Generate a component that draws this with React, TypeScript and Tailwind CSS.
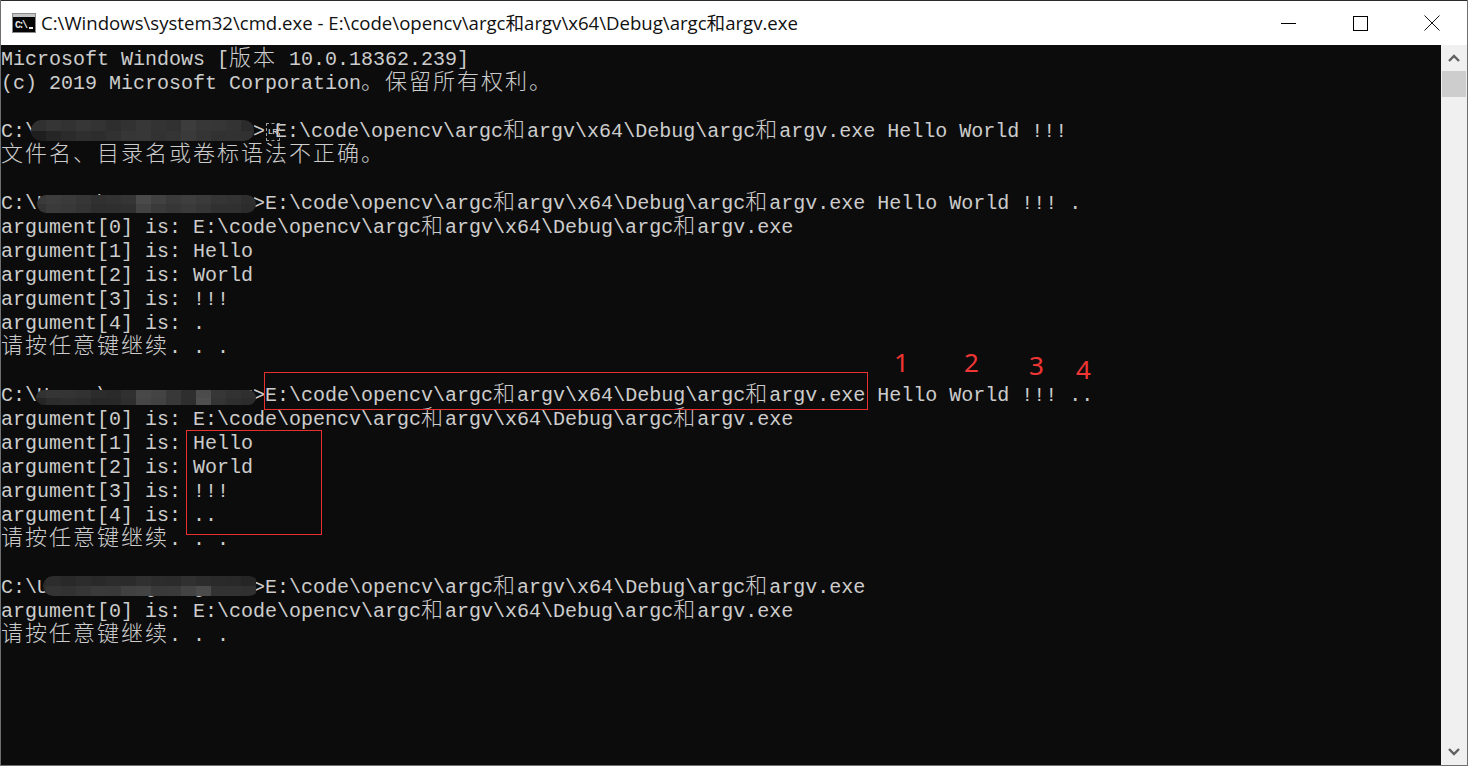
const cjk = /([\u3000-\u303f\u4e00-\u9fff\uff00-\uffef]+)/;

const EXE = "E:\\code\\opencv\\argc和argv\\x64\\Debug\\argc和argv.exe";
const USER = "C:\\Users\\xxxgxxxgxxxx>";

// mosaic over the user name: tiles are 15px wide and line up on multiples of 15
const smudges = [
  {
    left: 30, top: 0, width: 223, height: 21,
    upper: ["#303030", "#353535", "#323232", "#363636", "#333333", "#2e2e2e", "#323232", "#373737", "#333333", "#313131", "#3c3c3c", "#373737", "#363636", "#333333", "#2b2b2b"],
    lower: ["#1e1e1e", "#262626", "#2b2b2b", "#2f2f2f", "#2d2d2d", "#313131", "#363636", "#373737", "#323232", "#343434", "#3a3a3a", "#353535", "#313131", "#323232", "#313131"],
  },
  {
    left: 36, top: 3, width: 219, height: 18,
    upper: ["#3a3a3a", "#3d3d3d", "#3a3a3a", "#363636", "#303030", "#323232", "#353535", "#4a4a4a", "#414141", "#3a3a3a", "#3e3e3e", "#3a3a3a", "#353535", "#333333", "#2e2e2e"],
    lower: ["#333333", "#3a3a3a", "#383838", "#343434", "#2e2e2e", "#2f2f2f", "#303030", "#434343", "#3a3a3a", "#363636", "#3a3a3a", "#363636", "#303030", "#303030", "#2c2c2c"],
  },
  {
    left: 35, top: 6, width: 220, height: 15,
    upper: ["#323232", "#353535", "#343434", "#323232", "#2c2c2c", "#2a2a2a", "#303030", "#484848", "#444444", "#383838", "#2e2e2e", "#4b4b4b", "#363636", "#323232", "#2f2f2f"],
    lower: ["#252525", "#2c2c2c", "#2e2e2e", "#2c2c2c", "#272727", "#282828", "#2e2e2e", "#464646", "#424242", "#383838", "#2e2e2e", "#4f4f4f", "#343434", "#2f2f2f", "#2c2c2c"],
  },
  {
    left: 42, top: 0, width: 216, height: 20,
    upper: ["#2a2a2a", "#2d2d2d", "#292929", "#2c2c2c", "#292929", "#2c2c2c", "#2b2b2b", "#303030", "#2c2c2c", "#2b2b2b", "#303030", "#2c2c2c", "#2a2a2a", "#292929", "#252525"],
    lower: ["#2c2c2c", "#343434", "#323232", "#363636", "#3a3a3a", "#393939", "#414141", "#434343", "#393939", "#3a3a3a", "#434343", "#4b4b4b", "#323232", "#323232", "#303030"],
  },
];

function Txt({ children }: { children: string }) {
  return (
    <>
      {children.split(cjk).map((part, i) =>
        cjk.test(part) ? (
          <span key={i} className="text-[22px] leading-[0] tracking-[2px] font-['Noto_Sans_CJK_SC',sans-serif] font-light">
            {part}
          </span>
        ) : (
          <span key={i}>{part}</span>
        )
      )}
    </>
  );
}

function Line({ text = "" }: { text?: string }) {
  return (
    <div className="h-6 leading-6 whitespace-pre">
      <Txt>{text}</Txt>
    </div>
  );
}

function Smudge({ index }: { index: number }) {
  const s = smudges[index];
  return (
    <div
      className="absolute flex flex-col overflow-hidden rounded-[10px]"
      style={{ left: s.left, top: s.top, width: s.width, height: s.height }}
    >
      {[s.upper, s.lower].map((row, r) => (
        <div key={r} className="flex flex-1" style={{ marginLeft: -(s.left % 15) }}>
          {row.map((c, i) => (
            <div key={i} className="h-full w-[15px] shrink-0" style={{ backgroundColor: c }} />
          ))}
        </div>
      ))}
    </div>
  );
}

function Prompt({ smudge, lre, rest }: { smudge: number; lre?: boolean; rest: string }) {
  return (
    <div className="relative h-6 leading-6 whitespace-pre">
      <span>{USER}</span>
      {lre && <span className="inline-block w-[10px]" />}
      <Txt>{rest}</Txt>
      {lre && (
        <span className="absolute left-[265px] top-[3px] h-[18px] w-[14px] border border-dashed border-[#a0a0a0] text-center font-['Liberation_Sans',sans-serif] text-[7px] font-bold leading-[16px]">
          LR
        </span>
      )}
      <Smudge index={smudge} />
    </div>
  );
}

function CmdIcon() {
  return (
    <svg width="24" height="20" viewBox="0 0 24 20" className="shrink-0">
      <rect width="24" height="20" fill="#8a8a8a" />
      <rect x="1" y="1" width="22" height="3" fill="#c4c4c4" />
      <rect x="1" y="4" width="22" height="15" fill="#050505" />
      <text x="3" y="15" fontSize="10" fontWeight="700" fill="#e8e8e8" fontFamily="Liberation Mono, monospace" textLength="13">
        C:\
      </text>
      <rect x="17" y="14" width="4" height="2" fill="#e8e8e8" />
    </svg>
  );
}

export default function App() {
  return (
    <div className="flex h-[766px] w-[1468px] flex-col overflow-hidden bg-white border-b border-r border-l border-[#6f6f6f]">
      {/* title bar */}
      <div className="flex h-[45px] shrink-0 items-center border-t border-t-[#2b2b2b] pl-[11px] bg-white">
        <CmdIcon />
        <span className="ml-[5px] whitespace-pre font-['Open_Sans','Noto_Sans_CJK_SC',sans-serif] text-[18.6px] text-[#111111]">
          {"C:\\Windows\\system32\\cmd.exe - " + EXE}
        </span>
        <div className="ml-auto flex h-full items-center">
          <div className="flex h-full w-[72px] items-center justify-center">
            <div className="h-px w-[15px] bg-black" />
          </div>
          <div className="flex h-full w-[72px] items-center justify-center">
            <div className="h-[15px] w-[15px] border border-black" />
          </div>
          <div className="flex h-full w-[71px] items-center justify-center">
            <svg width="16" height="16" viewBox="0 0 16 16" stroke="#111" strokeWidth="1" fill="none">
              <path d="M0.5 0.5 15.5 15.5M15.5 0.5 0.5 15.5" />
            </svg>
          </div>
        </div>
      </div>

      <div className="flex min-h-0 flex-1">
        {/* console */}
        <div className="relative flex-1 bg-[#0c0c0c] pt-[3px] font-['Liberation_Mono',monospace] text-[20px] text-[#cccccc]">
          <Line text="Microsoft Windows [版本 10.0.18362.239]" />
          <Line text="(c) 2019 Microsoft Corporation。保留所有权利。" />
          <Line />
          <Prompt smudge={0} lre rest={EXE + " Hello World !!!"} />
          <Line text="文件名、目录名或卷标语法不正确。" />
          <Line />
          <Prompt smudge={1} rest={EXE + " Hello World !!! ."} />
          <Line text={"argument[0] is: " + EXE} />
          <Line text="argument[1] is: Hello" />
          <Line text="argument[2] is: World" />
          <Line text="argument[3] is: !!!" />
          <Line text="argument[4] is: ." />
          <Line text="请按任意键继续. . ." />
          <Line />
          <Prompt smudge={2} rest={EXE + " Hello World !!! .."} />
          <Line text={"argument[0] is: " + EXE} />
          <Line text="argument[1] is: Hello" />
          <Line text="argument[2] is: World" />
          <Line text="argument[3] is: !!!" />
          <Line text="argument[4] is: .." />
          <Line text="请按任意键继续. . ." />
          <Line />
          <Prompt smudge={3} rest={EXE} />
          <Line text={"argument[0] is: " + EXE} />
          <Line text="请按任意键继续. . ." />

          {/* red annotations drawn on top of the screenshot */}
          <div className="absolute left-[263px] top-[327px] h-[38px] w-[604px] border border-[#e8302e]" />
          <div className="absolute left-[185px] top-[385px] h-[105px] w-[136px] border border-[#e8302e]" />
          <span className="absolute left-[893px] top-[299px] font-['Noto_Sans',sans-serif] text-[26px] leading-9 text-[#f03535]">1</span>
          <span className="absolute left-[963px] top-[299px] font-['Noto_Sans',sans-serif] text-[26px] leading-9 text-[#f03535]">2</span>
          <span className="absolute left-[1028px] top-[302px] font-['Noto_Sans',sans-serif] text-[26px] leading-9 text-[#f03535]">3</span>
          <span className="absolute left-[1075px] top-[306px] font-['Noto_Sans',sans-serif] text-[26px] leading-9 text-[#f03535]">4</span>
        </div>

        {/* scrollbar */}
        <div className="flex w-[26px] shrink-0 flex-col bg-[#f0f0f0]">
          <div className="flex h-[26px] items-center justify-center">
            <svg width="12" height="8" viewBox="0 0 12 8" fill="none" stroke="#606060" strokeWidth="2.4">
              <path d="M1 7 6 2 11 7" />
            </svg>
          </div>
          <div className="mx-px h-[26px] bg-[#cdcdcd]" />
          <div className="mt-auto flex h-[26px] items-center justify-center">
            <svg width="12" height="8" viewBox="0 0 12 8" fill="none" stroke="#606060" strokeWidth="2.4">
              <path d="M1 1 6 6 11 1" />
            </svg>
          </div>
        </div>
      </div>
    </div>
  );
}
